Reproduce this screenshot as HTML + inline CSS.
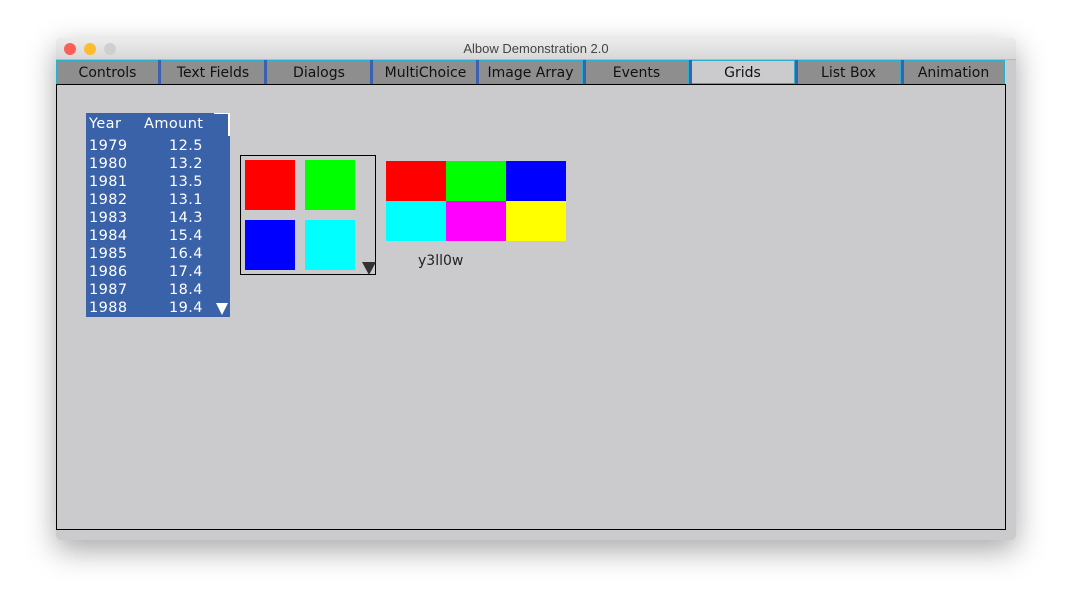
<!DOCTYPE html>
<html><head><style>
*{margin:0;padding:0;box-sizing:border-box}
body{width:1072px;height:614px;background:#fff;position:relative;font-family:"DejaVu Sans","Liberation Sans",sans-serif;overflow:hidden}
.win{position:absolute;left:56px;top:38px;width:960px;height:502px;background:#cbcbcd;border-radius:5px;box-shadow:0 10px 30px rgba(0,0,0,.35);overflow:hidden}
.title{position:absolute;left:0;top:0;width:960px;height:22px;background:linear-gradient(#ececec,#d8d8d8);border-bottom:1px solid #b8b8b8;text-align:center;font:13px "Liberation Sans",sans-serif;line-height:22px;color:#444}
.dot{position:absolute;top:5px;width:12px;height:12px;border-radius:50%}
.tab{position:absolute;top:22px;height:24px;background:#8e8e8e;border:1px solid #2ab0cc;font-size:14px;text-align:center;line-height:24px;color:#111}
.tab.sel{background:#cbcbcd}
.sep{position:absolute;top:22px;width:3px;height:24px;background:#3a62b0}
.content{position:absolute;left:0;top:46px;width:950px;height:446px;border:1px solid #000}
.a{position:absolute}
.tbl{position:absolute;left:29px;top:28px;width:144px;height:204px;background:#3a62a8;color:#fff;font-size:14.5px}
.r{position:absolute;left:3px;height:18px;line-height:18px;letter-spacing:.4px}
.r span{position:absolute;left:80px}
</style></head><body>
<div class="win">
<div class="title">Albow Demonstration 2.0
<div class="dot" style="left:8px;background:#fc5f57"></div>
<div class="dot" style="left:28px;background:#fdbc2e"></div>
<div class="dot" style="left:48px;background:#cfcfcf"></div></div>
<div class="tab" style="left:0;width:103px">Controls</div>
<div class="tab" style="left:105px;width:104px">Text Fields</div>
<div class="tab" style="left:211px;width:104px">Dialogs</div>
<div class="tab" style="left:317px;width:105px">MultiChoice</div>
<div class="tab" style="left:422px;width:105px">Image Array</div>
<div class="tab" style="left:528px;width:105px">Events</div>
<div class="tab sel" style="left:634px;width:105px">Grids</div>
<div class="tab" style="left:740px;width:105px">List Box</div>
<div class="tab" style="left:846px;width:103px">Animation</div>
<div class="sep" style="left:102px"></div><div class="sep" style="left:208px"></div><div class="sep" style="left:314px"></div><div class="sep" style="left:420px"></div><div class="sep" style="left:527px"></div><div class="sep" style="left:633px"></div><div class="sep" style="left:739px"></div><div class="sep" style="left:845px"></div>
<div class="content">
<div class="tbl">
<div class="a" style="left:128px;top:0;width:16px;height:23px;border-top:1px solid #fff;border-right:2px solid #fff;background:#3a62a8"></div>
<div class="r" style="top:2px">Year<span style="left:55px">Amount</span></div>
<div class="r" style="top:24px">1979<span>12.5</span></div>
<div class="r" style="top:42px">1980<span>13.2</span></div>
<div class="r" style="top:60px">1981<span>13.5</span></div>
<div class="r" style="top:78px">1982<span>13.1</span></div>
<div class="r" style="top:96px">1983<span>14.3</span></div>
<div class="r" style="top:114px">1984<span>15.4</span></div>
<div class="r" style="top:132px">1985<span>16.4</span></div>
<div class="r" style="top:150px">1986<span>17.4</span></div>
<div class="r" style="top:168px">1987<span>18.4</span></div>
<div class="r" style="top:186px">1988<span>19.4</span></div>
<svg class="a" style="left:129px;top:189px" width="14" height="14"><polygon points="1,1 13,1 7,13" fill="#fff"/></svg>
</div>
<div class="a" style="left:183px;top:70px;width:136px;height:120px;border:1px solid #000">
<div class="a" style="left:4px;top:4px;width:50px;height:50px;background:#f00"></div>
<div class="a" style="left:64px;top:4px;width:50px;height:50px;background:#0f0"></div>
<div class="a" style="left:4px;top:64px;width:50px;height:50px;background:#00f"></div>
<div class="a" style="left:64px;top:64px;width:50px;height:50px;background:#0ff"></div>
<svg class="a" style="left:121px;top:106px" width="14" height="13"><polygon points="0,0 14,0 7,13" fill="#333"/></svg>
</div>
<div class="a" style="left:329px;top:76px;width:60px;height:40px;background:#f00"></div>
<div class="a" style="left:389px;top:76px;width:60px;height:40px;background:#0f0"></div>
<div class="a" style="left:449px;top:76px;width:60px;height:40px;background:#00f"></div>
<div class="a" style="left:329px;top:116px;width:60px;height:40px;background:#0ff"></div>
<div class="a" style="left:389px;top:116px;width:60px;height:40px;background:#f0f"></div>
<div class="a" style="left:449px;top:116px;width:60px;height:40px;background:#ff0"></div>
<div class="a" style="left:361px;top:168px;font-size:14px;color:#222">y3ll0w</div>
</div>
</div>
</body></html>
